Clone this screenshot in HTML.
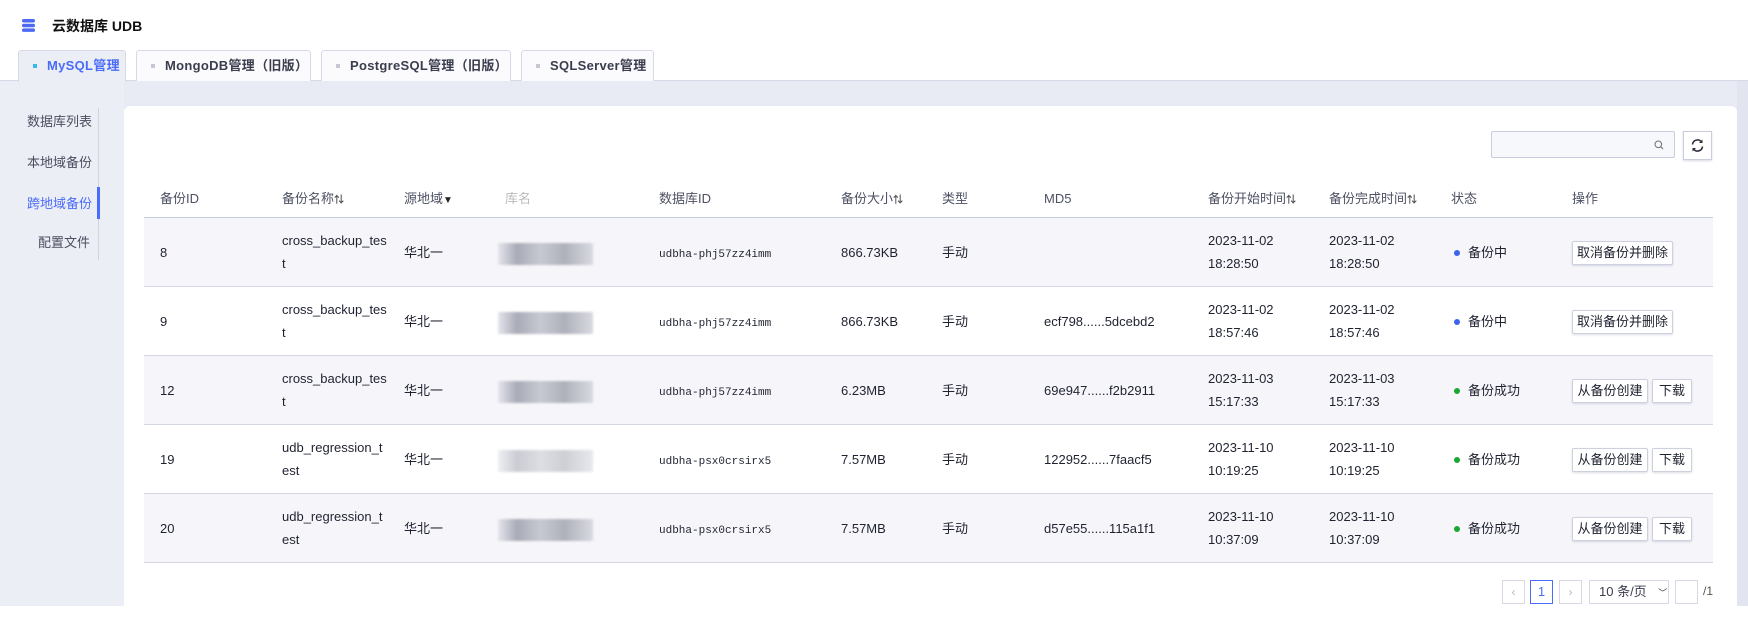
<!DOCTYPE html>
<html><head><meta charset="utf-8"><style>
*{margin:0;padding:0;box-sizing:border-box}
body{width:1748px;height:606px;overflow:hidden;background:#fff;font-family:"Liberation Sans","Noto Sans CJK SC",sans-serif;font-size:13px;color:#1f2230;position:relative}
.a{position:absolute;white-space:nowrap}
.tab{position:absolute;top:50px;height:31px;border:1px solid #d6dae8;border-bottom:none;border-radius:3px 3px 0 0;background:#fbfbfd;font-weight:bold;font-size:13px;color:#3a3d4d;line-height:30px;letter-spacing:.3px}
.tab i{display:inline-block;width:4px;height:4px;background:#c5c8d2;margin:0 10px 2px 14px;vertical-align:middle}
.side{position:absolute;left:27px;font-size:13px;color:#4a4e5e}
.th{position:absolute;top:189px;color:#4d5163;font-size:13px;line-height:20px}
.row{position:absolute;left:144px;width:1569px;height:69px;border-bottom:1px solid #d4d7e6}
.g{background:#f6f6fa}
.c{position:absolute;font-size:13px;line-height:23px}
.mono{font-family:"Liberation Mono",monospace;font-size:11px;margin-top:3px}
.btn{position:absolute;height:24px;border:1px solid #cdd1df;background:#fff;box-shadow:0 1px 2px rgba(60,70,110,.18);font-size:13px;line-height:22px;text-align:center;border-radius:2px}
.dot{display:inline-block;width:6px;height:6px;border-radius:50%;margin-right:8px;vertical-align:middle;position:relative;top:-1px}
.blur{position:absolute;background:linear-gradient(90deg,#e4e5ec,#a9abb7 20%,#c7c9d2 45%,#aeb0bb 70%,#d9dae2);height:22px;width:95px;filter:blur(1px)}
.sort{font-size:10px;color:#555;font-weight:bold}
.pg{position:absolute;top:580px;height:24px;border:1px solid #d6d9e5;background:#fff;color:#b6b9c6;text-align:center;line-height:22px;font-size:12px}
</style></head><body>
<svg class="a" style="left:22px;top:19px" width="13" height="13" viewBox="0 0 13 13"><rect x="0" y="0" width="13" height="3.5" rx="1.7" fill="#4f6af2"/><rect x="0" y="4.7" width="13" height="3.5" rx="1.7" fill="#4f6af2"/><rect x="0" y="9.4" width="13" height="3.5" rx="1.7" fill="#4f6af2"/></svg>
<div class="a" style="left:52px;top:16px;font-weight:bold;font-size:14px;color:#111">云数据库 UDB</div>

<div style="position:absolute;left:0;top:80px;width:1748px;height:526px;background:#e9ebf4;border-top:1px solid #d6dae8"></div>
<div class="tab" style="left:18px;width:108px;background:#eceef6;height:32px;color:#4a6cf7;z-index:2"><i style="background:#38b7f0"></i>MySQL管理</div>
<div class="tab" style="left:136px;width:175px"><i></i>MongoDB管理（旧版）</div>
<div class="tab" style="left:321px;width:190px"><i></i>PostgreSQL管理（旧版）</div>
<div class="tab" style="left:521px;width:133px"><i></i>SQLServer管理</div>

<div style="position:absolute;left:0;top:81px;width:124px;height:525px;background:#eceef6"></div>
<div style="position:absolute;left:98px;top:108px;width:1px;height:152px;background:#d0d4e2"></div>
<div style="position:absolute;left:97px;top:187px;width:3px;height:32px;background:#4a6cf7"></div>
<div class="side" style="top:111px">数据库列表</div>
<div class="side" style="top:152px">本地域备份</div>
<div class="side" style="top:193px;color:#4a6cf7">跨地域备份</div>
<div class="side" style="top:232px;left:38px">配置文件</div>

<div style="position:absolute;left:124px;top:106px;width:1613px;height:520px;background:#fff;border-radius:6px 6px 0 0"></div>
<div style="position:absolute;left:1737px;top:81px;width:11px;height:525px;background:#e2e4ef"></div>

<div style="position:absolute;left:1491px;top:131px;width:184px;height:27px;border:1px solid #c9cddd;background:#f7f8fb;border-radius:2px"></div>
<svg class="a" style="left:1654px;top:140px" width="10" height="10" viewBox="0 0 10 10"><circle cx="4.3" cy="4.3" r="3.3" fill="none" stroke="#777" stroke-width="1.1"/><path d="M6.8 6.8L9 9" stroke="#777" stroke-width="1.2"/></svg>
<div style="position:absolute;left:1683px;top:131px;width:29px;height:29px;border:1px solid #c9cddd;background:#fff;box-shadow:0 1px 2px rgba(60,70,110,.2)"></div>
<svg class="a" style="left:1690px;top:138px" width="15" height="15" viewBox="0 0 15 15"><path d="M2.5 6.5A5 5 0 0 1 11.5 4" fill="none" stroke="#2a2d3a" stroke-width="1.5"/><path d="M12.5 8.5A5 5 0 0 1 3.5 11" fill="none" stroke="#2a2d3a" stroke-width="1.5"/><path d="M12.5 1.5v3.5h-3.5z" fill="#2a2d3a"/><path d="M2.5 13.5v-3.5h3.5z" fill="#2a2d3a"/></svg>

<div class="th" style="left:160px">备份ID</div>
<div class="th" style="left:282px">备份名称<span class="sort">⇅</span></div>
<div class="th" style="left:404px">源地域<span style="font-size:10px;color:#222">▼</span></div>
<div class="th" style="left:505px;color:#bbb">库名</div>
<div class="th" style="left:659px">数据库ID</div>
<div class="th" style="left:841px">备份大小<span class="sort">⇅</span></div>
<div class="th" style="left:942px">类型</div>
<div class="th" style="left:1044px">MD5</div>
<div class="th" style="left:1208px">备份开始时间<span class="sort">⇅</span></div>
<div class="th" style="left:1329px">备份完成时间<span class="sort">⇅</span></div>
<div class="th" style="left:1451px">状态</div>
<div class="th" style="left:1572px">操作</div>
<div style="position:absolute;left:144px;top:217px;width:1569px;height:1px;background:#c8cce0"></div>

<div class="row g" style="top:218px"></div>
<div class="row" style="top:287px"></div>
<div class="row g" style="top:356px"></div>
<div class="row" style="top:425px"></div>
<div class="row g" style="top:494px"></div>

<div class="c" style="left:160px;top:241px">8</div>
<div class="c" style="left:282px;top:229px">cross_backup_tes<br>t</div>
<div class="c" style="left:404px;top:241px">华北一</div>
<div class="blur" style="left:498px;top:243px"></div>
<div class="c mono" style="left:659px;top:241px">udbha-phj57zz4imm</div>
<div class="c" style="left:841px;top:241px">866.73KB</div>
<div class="c" style="left:942px;top:241px">手动</div>
<div class="c" style="left:1208px;top:229px">2023-11-02<br>18:28:50</div>
<div class="c" style="left:1329px;top:229px">2023-11-02<br>18:28:50</div>
<div class="c" style="left:1454px;top:241px"><span class="dot" style="background:#3d63ee"></span>备份中</div>
<div class="btn" style="left:1572px;top:241px;width:101px">取消备份并删除</div>

<div class="c" style="left:160px;top:310px">9</div>
<div class="c" style="left:282px;top:298px">cross_backup_tes<br>t</div>
<div class="c" style="left:404px;top:310px">华北一</div>
<div class="blur" style="left:498px;top:312px"></div>
<div class="c mono" style="left:659px;top:310px">udbha-phj57zz4imm</div>
<div class="c" style="left:841px;top:310px">866.73KB</div>
<div class="c" style="left:942px;top:310px">手动</div>
<div class="c" style="left:1044px;top:310px">ecf798......5dcebd2</div>
<div class="c" style="left:1208px;top:298px">2023-11-02<br>18:57:46</div>
<div class="c" style="left:1329px;top:298px">2023-11-02<br>18:57:46</div>
<div class="c" style="left:1454px;top:310px"><span class="dot" style="background:#3d63ee"></span>备份中</div>
<div class="btn" style="left:1572px;top:310px;width:101px">取消备份并删除</div>

<div class="c" style="left:160px;top:379px">12</div>
<div class="c" style="left:282px;top:367px">cross_backup_tes<br>t</div>
<div class="c" style="left:404px;top:379px">华北一</div>
<div class="blur" style="left:498px;top:381px"></div>
<div class="c mono" style="left:659px;top:379px">udbha-phj57zz4imm</div>
<div class="c" style="left:841px;top:379px">6.23MB</div>
<div class="c" style="left:942px;top:379px">手动</div>
<div class="c" style="left:1044px;top:379px">69e947......f2b2911</div>
<div class="c" style="left:1208px;top:367px">2023-11-03<br>15:17:33</div>
<div class="c" style="left:1329px;top:367px">2023-11-03<br>15:17:33</div>
<div class="c" style="left:1454px;top:379px"><span class="dot" style="background:#1aa834"></span>备份成功</div>
<div class="btn" style="left:1572px;top:379px;width:76px">从备份创建</div>
<div class="btn" style="left:1652px;top:379px;width:40px">下载</div>

<div class="c" style="left:160px;top:448px">19</div>
<div class="c" style="left:282px;top:436px">udb_regression_t<br>est</div>
<div class="c" style="left:404px;top:448px">华北一</div>
<div class="blur" style="left:498px;top:450px;opacity:.6"></div>
<div class="c mono" style="left:659px;top:448px">udbha-psx0crsirx5</div>
<div class="c" style="left:841px;top:448px">7.57MB</div>
<div class="c" style="left:942px;top:448px">手动</div>
<div class="c" style="left:1044px;top:448px">122952......7faacf5</div>
<div class="c" style="left:1208px;top:436px">2023-11-10<br>10:19:25</div>
<div class="c" style="left:1329px;top:436px">2023-11-10<br>10:19:25</div>
<div class="c" style="left:1454px;top:448px"><span class="dot" style="background:#1aa834"></span>备份成功</div>
<div class="btn" style="left:1572px;top:448px;width:76px">从备份创建</div>
<div class="btn" style="left:1652px;top:448px;width:40px">下载</div>

<div class="c" style="left:160px;top:517px">20</div>
<div class="c" style="left:282px;top:505px">udb_regression_t<br>est</div>
<div class="c" style="left:404px;top:517px">华北一</div>
<div class="blur" style="left:498px;top:519px"></div>
<div class="c mono" style="left:659px;top:517px">udbha-psx0crsirx5</div>
<div class="c" style="left:841px;top:517px">7.57MB</div>
<div class="c" style="left:942px;top:517px">手动</div>
<div class="c" style="left:1044px;top:517px">d57e55......115a1f1</div>
<div class="c" style="left:1208px;top:505px">2023-11-10<br>10:37:09</div>
<div class="c" style="left:1329px;top:505px">2023-11-10<br>10:37:09</div>
<div class="c" style="left:1454px;top:517px"><span class="dot" style="background:#1aa834"></span>备份成功</div>
<div class="btn" style="left:1572px;top:517px;width:76px">从备份创建</div>
<div class="btn" style="left:1652px;top:517px;width:40px">下载</div>

<div class="pg" style="left:1502px;width:23px">‹</div>
<div class="pg" style="left:1530px;width:23px;border-color:#4a6cf7;color:#4a6cf7;font-size:13px">1</div>
<div class="pg" style="left:1559px;width:23px">›</div>
<div class="pg" style="left:1589px;width:80px;color:#3a3d4d;text-align:left;padding-left:9px;font-size:13px">10 条/页 <span style="font-size:9px;margin-left:8px">﹀</span></div>
<div class="pg" style="left:1675px;width:23px"></div>
<div class="a" style="left:1703px;top:584px;font-size:12px;color:#555">/1</div>
</body></html>
